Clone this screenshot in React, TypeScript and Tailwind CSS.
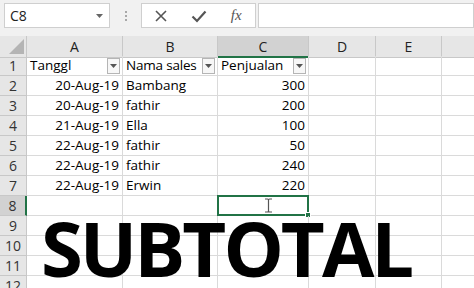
import React from "react";

const cols = ["A", "B", "C", "D", "E", ""];
const data: [string, string, string][] = [
  ["20-Aug-19", "Bambang", "300"],
  ["20-Aug-19", "fathir", "200"],
  ["21-Aug-19", "Ella", "100"],
  ["22-Aug-19", "fathir", "50"],
  ["22-Aug-19", "fathir", "240"],
  ["22-Aug-19", "Erwin", "220"],
];

function FilterBtn() {
  return (
    <div className="absolute right-[2px] top-[2px] w-[13px] h-[16px] border border-[#b5b5b5] bg-[#f7f7f7] flex items-center justify-center">
      <svg width="7" height="4" viewBox="0 0 7 4">
        <path d="M0 0 L7 0 L3.5 4 Z" fill="#555" />
      </svg>
    </div>
  );
}

export default function App() {
  const rows = Array.from({ length: 12 }, (_, i) => i + 1);
  return (
    <div
      className="w-[474px] h-[288px] overflow-hidden bg-white relative"
      style={{ fontFamily: '"Open Sans", "Noto Sans", sans-serif' }}
    >
      {/* formula bar */}
      <div className="h-[36px] bg-[#f1f1f1] flex items-start pt-[3px]">
        <div className="ml-[4px] w-[106px] h-[25px] bg-white border border-[#cfcfcf] flex items-center justify-between pl-[5px] pr-[6px]">
          <span className="text-[14px] text-[#222]">C8</span>
          <svg width="7" height="4" viewBox="0 0 7 4">
            <path d="M0 0 L7 0 L3.5 4 Z" fill="#666" />
          </svg>
        </div>
        <div className="w-[31px] h-[25px] flex flex-col items-center justify-center gap-[2px]">
          <div className="w-[2px] h-[2px] bg-[#a8a8a8]" />
          <div className="w-[2px] h-[2px] bg-[#a8a8a8]" />
          <div className="w-[2px] h-[2px] bg-[#a8a8a8]" />
        </div>
        <div className="w-[115px] h-[25px] bg-white border border-[#cfcfcf] flex items-center">
          <div className="w-[38px] flex justify-center">
            <svg width="14" height="14" viewBox="0 0 14 14">
              <path d="M2 2 L12 12 M12 2 L2 12" stroke="#555" strokeWidth="1.6" />
            </svg>
          </div>
          <div className="w-[38px] flex justify-center">
            <svg width="16" height="14" viewBox="0 0 16 14">
              <path d="M1.5 7.5 L6 12 L14.5 2.5" stroke="#555" strokeWidth="2.2" fill="none" />
            </svg>
          </div>
          <div
            className="w-[38px] flex justify-center text-[15px] italic text-[#555]"
            style={{ fontFamily: '"Liberation Serif", serif' }}
          >
            fx
          </div>
        </div>
        <div className="ml-[2px] flex-1 h-[25px] bg-white border border-[#cfcfcf]" />
      </div>

      {/* grid */}
      <div
        className="grid"
        style={{ gridTemplateColumns: "27px 96px 95px 91px 67px 66px 40px", gridAutoRows: "20px" }}
      >
        {/* header row */}
        <div className="h-[22px] bg-[#e6e6e6] border-r border-b border-[#c8c8c8] relative">
          <svg className="absolute right-[2px] bottom-[3px]" width="15" height="15" viewBox="0 0 15 15">
            <path d="M15 0 L15 15 L0 15 Z" fill="#b4b4b4" />
          </svg>
        </div>
        {cols.map((c) => (
          <div
            key={c || "F"}
            className={
              c === "C"
                ? "h-[22px] bg-[#d2d2d2] border-r border-[#c8c8c8] border-b-2 border-b-[#217346] flex items-center justify-center text-[14px] text-[#222]"
                : "h-[22px] bg-[#e6e6e6] border-r border-b border-[#c8c8c8] flex items-center justify-center text-[14px] text-[#222]"
            }
          >
            {c}
          </div>
        ))}
        {rows.map((r) => {
          const d = r >= 2 && r <= 7 ? data[r - 2] : null;
          return (
            <React.Fragment key={r}>
              <div
                className={
                  r === 8
                    ? "bg-[#d2d2d2] border-b border-[#c8c8c8] border-r-2 border-r-[#217346] flex items-center justify-center text-[14px] text-[#333]"
                    : "bg-[#e6e6e6] border-r border-b border-[#c8c8c8] flex items-center justify-center text-[14px] text-[#333]"
                }
              >
                {r}
              </div>
              {/* A */}
              <div className="relative border-r border-b border-[#dadada] flex items-center justify-end pr-[3px] text-[13.5px] text-black whitespace-nowrap">
                {r === 1 ? (
                  <>
                    <span className="absolute left-[3px]">Tanggl</span>
                    <FilterBtn />
                  </>
                ) : (
                  d?.[0]
                )}
              </div>
              {/* B */}
              <div className="relative border-r border-b border-[#dadada] flex items-center pl-[3px] text-[13.5px] text-black whitespace-nowrap">
                {r === 1 ? (
                  <>
                    <span className="tracking-[-0.2px]">Nama sales</span>
                    <FilterBtn />
                  </>
                ) : (
                  d?.[1]
                )}
              </div>
              {/* C */}
              <div className="relative border-r border-b border-[#dadada] flex items-center justify-end pr-[3px] text-[13.5px] text-black whitespace-nowrap">
                {r === 1 ? (
                  <>
                    <span className="absolute left-[3px]">Penjualan</span>
                    <FilterBtn />
                  </>
                ) : (
                  d?.[2]
                )}
                {r === 8 && (
                  <div className="absolute left-[-1px] top-[-1px] right-[-1px] bottom-[-1px] border-2 border-[#217346]">
                    <svg className="absolute left-[45px] top-[1px]" width="9" height="15" viewBox="0 0 9 15">
                      <path d="M1 1 L3.5 1 Q4.5 1 4.5 2 L4.5 13 Q4.5 14 3.5 14 L1 14 M8 1 L5.5 1 Q4.5 1 4.5 2 M4.5 13 Q4.5 14 5.5 14 L8 14" stroke="#555" strokeWidth="1.2" fill="none" />
                    </svg>
                    <div className="absolute right-[-4px] bottom-[-4px] w-[6px] h-[6px] bg-[#217346] border border-white" />
                  </div>
                )}
              </div>
              <div className="border-r border-b border-[#dadada]" />
              <div className="border-r border-b border-[#dadada]" />
              <div className="border-r border-b border-[#dadada]" />
            </React.Fragment>
          );
        })}
      </div>

      <div
        className="absolute left-[41px] top-[210px] text-[76px] font-bold text-black leading-[76px] tracking-[-3px] whitespace-nowrap"
        style={{ fontFamily: '"Open Sans", sans-serif' }}
      >
        SUBTOTAL
      </div>
    </div>
  );
}
